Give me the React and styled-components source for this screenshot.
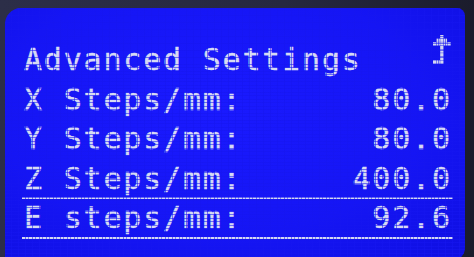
import React from "react";
import styled, { createGlobalStyle } from "styled-components";

const GlobalStyle = createGlobalStyle`
  html, body {
    margin: 0;
    padding: 0;
    background: #22243a;
  }
  * { box-sizing: border-box; }
`;

const Bezel = styled.div`
  width: 474px;
  height: 257px;
  padding: 8px 9px 0 5px;
  background: linear-gradient(90deg, #2c2e48 0%, #262840 60%, #1b1c2c 100%);
  overflow: hidden;
`;

const Screen = styled.div`
  position: relative;
  height: calc(100% + 3px);
  border-radius: 16px 8px 12px 4px;
  background: radial-gradient(ellipse at 45% 40%, #1a1aff 0%, #1515f4 60%, #0e0ee0 100%);
  padding: 33px 12px 0 17px;
  display: flex;
  flex-direction: column;
  overflow: hidden;
`;

const DotGrid = styled.div`
  position: absolute;
  inset: 0;
  pointer-events: none;
  background-image:
    repeating-linear-gradient(90deg, transparent 0 2.7px, rgba(22, 22, 240, 0.55) 2.7px 3.5px),
    repeating-linear-gradient(0deg, transparent 0 2.7px, rgba(22, 22, 240, 0.55) 2.7px 3.5px);
`;

const Row = styled.div`
  height: 39.5px;
  display: flex;
  flex-direction: column;
`;

const Line = styled.div`
  height: 37.5px;
  display: flex;
  align-items: flex-start;
  justify-content: space-between;
  padding: 0 3px 0 2px;
  font-family: "DejaVu Sans Mono", "Liberation Mono", monospace;
  font-size: 30px;
  line-height: 37.5px;
  letter-spacing: 1.8px;
  color: #d6daf3;
  -webkit-text-stroke: 0.4px #d6daf3;
  white-space: pre;
`;

const Label = styled.span``;

const Value = styled.span`
  margin-right: -1.8px;
`;

const Rule = styled.div`
  height: 2px;
  background: ${(p) =>
    p.$on
      ? "repeating-linear-gradient(90deg, #d3d7f2 0 2.6px, rgba(211,215,242,0.55) 2.6px 3.5px)"
      : "transparent"};
`;

const BackIcon = styled.svg`
  width: 18px;
  height: 29px;
  margin-top: -6px;
  margin-right: -1px;
`;

function BackArrow() {
  const px = [
    [2, 0],
    [1, 1], [2, 1], [3, 1],
    [0, 2], [1, 2], [2, 2], [3, 2], [4, 2],
    [2, 3], [2, 4], [2, 5], [2, 6],
    [0, 7], [1, 7], [2, 7],
  ];
  return (
    <BackIcon viewBox="0 0 5 8" preserveAspectRatio="none">
      {px.map(([x, y]) => (
        <rect key={`${x}-${y}`} x={x} y={y} width="0.9" height="0.9" fill="#d3d7f2" />
      ))}
    </BackIcon>
  );
}

const rows = [
  { label: "X Steps/mm:", value: "80.0" },
  { label: "Y Steps/mm:", value: "80.0" },
  { label: "Z Steps/mm:", value: "400.0", rule: true },
  { label: "E steps/mm:", value: "92.6", rule: true },
];

export default function App() {
  return (
    <>
      <GlobalStyle />
      <Bezel>
        <Screen>
          <Row>
            <Line>
              <Label>Advanced Settings</Label>
              <BackArrow />
            </Line>
            <Rule />
          </Row>
          {rows.map((r) => (
            <Row key={r.label}>
              <Line>
                <Label>{r.label}</Label>
                <Value>{r.value}</Value>
              </Line>
              <Rule $on={r.rule} />
            </Row>
          ))}
          <DotGrid />
        </Screen>
      </Bezel>
    </>
  );
}
